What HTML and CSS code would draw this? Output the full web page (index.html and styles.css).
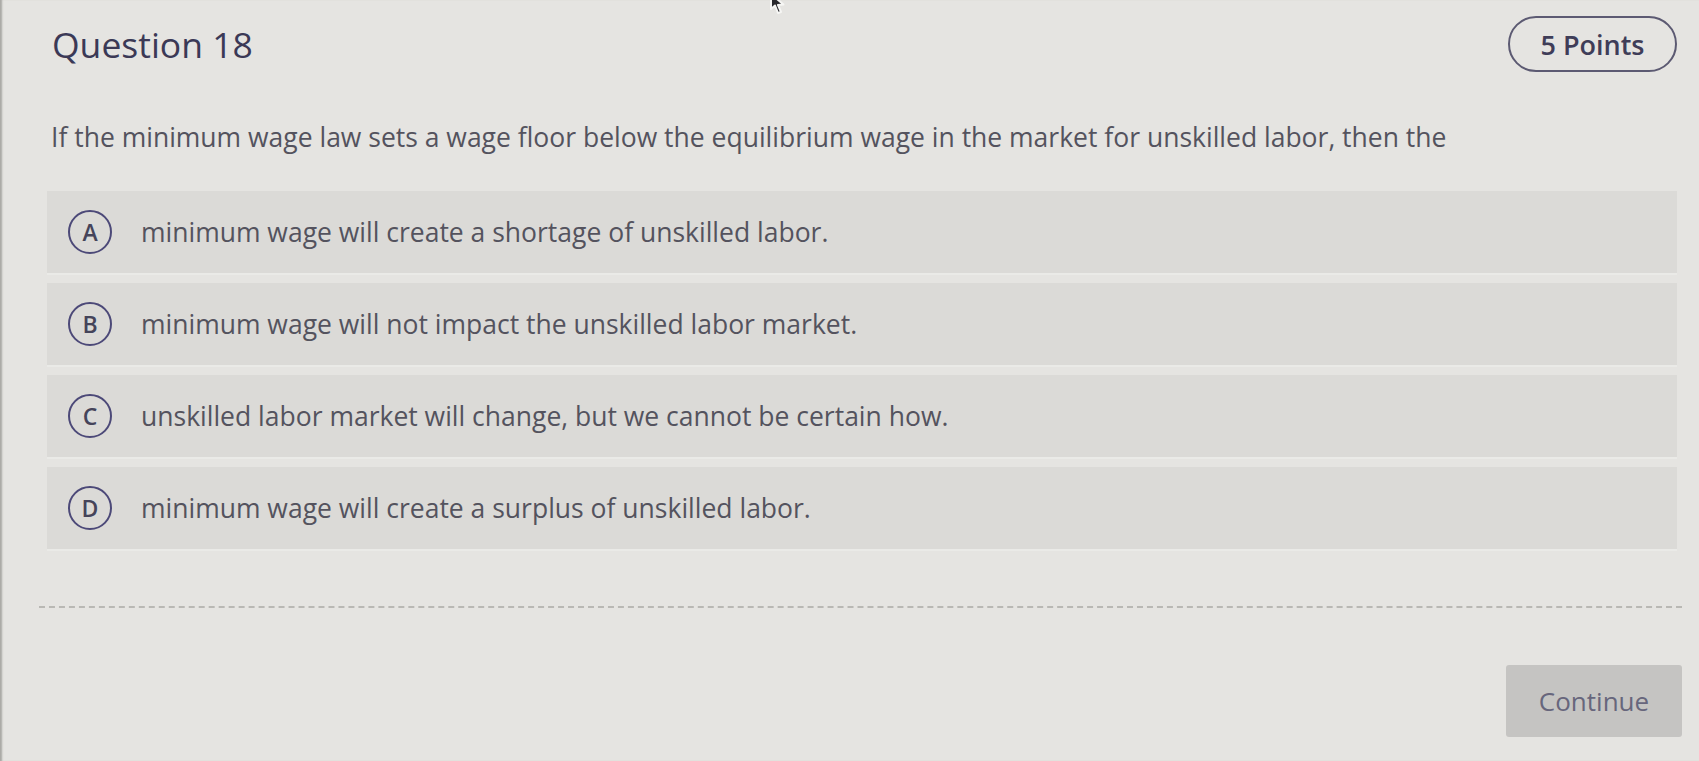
FILE: index.html
```html
<!DOCTYPE html>
<html lang="en">
<head>
<meta charset="utf-8">
<title>Question 18</title>
<link rel="stylesheet" href="styles.css">
</head>
<body>
<div class="page">
  <header class="head">
    <h1 class="title">Question 18</h1>
    <div class="points">5 Points</div>
  </header>
  <p class="question">If the minimum wage law sets a wage floor below the equilibrium wage in the market for unskilled labor, then the</p>
  <ul class="options">
    <li class="option"><span class="letter">A</span><span class="text">minimum wage will create a shortage of unskilled labor.</span></li>
    <li class="option"><span class="letter">B</span><span class="text">minimum wage will not impact the unskilled labor market.</span></li>
    <li class="option"><span class="letter">C</span><span class="text">unskilled labor market will change, but we cannot be certain how.</span></li>
    <li class="option"><span class="letter">D</span><span class="text">minimum wage will create a surplus of unskilled labor.</span></li>
  </ul>
  <div class="divider"></div>
  <div class="actions">
    <button class="continue">Continue</button>
  </div>
</div>
<svg class="cursor" width="22" height="22" viewBox="0 0 22 22">
  <path d="M3 -6 L3 9 L7 5.5 L10 13 L13 12 L10 5 L15.5 4.5 Z" fill="#2a2a2e" stroke="#f6f6f4" stroke-width="2" stroke-linejoin="round"/>
</svg>
</body>
</html>
```
FILE: styles.css
```css
html, body {
  margin: 0;
  padding: 0;
}
body {
  background: #e5e4e1;
  font-family: "Open Sans", "Noto Sans", sans-serif;
  color: #55545e;
  width: 1699px;
  height: 761px;
  overflow: hidden;
  position: relative;
  box-shadow: inset 3px 0 2px -1px #a9a8a4;
}
.page {
  padding: 16px 22px 0 47px;
}
.head {
  display: flex;
  justify-content: space-between;
  align-items: center;
}
.title {
  margin: 0 0 0 5px;
  font-size: 35.5px;
  font-weight: 400;
  color: #3b3956;
  line-height: 44px;
}
.points {
  box-sizing: border-box;
  width: 169px;
  height: 56px;
  border: 2px solid #5c5a72;
  border-radius: 28px;
  display: flex;
  align-items: center;
  justify-content: center;
  font-size: 27px;
  font-weight: 600;
  color: #3f3d58;
}
.question {
  margin: 47px 0 0 4px;
  font-size: 26.5px;
  line-height: 36px;
  color: #54535e;
}
.options {
  list-style: none;
  margin: 36px 0 0 0;
  padding: 0;
  display: flex;
  flex-direction: column;
  gap: 10px;
}
.option {
  height: 82px;
  background: #dbdad7;
  display: flex;
  align-items: center;
  padding-left: 21px;
  box-shadow: 0 2px 0 #eaeae7;
}
.letter {
  box-sizing: border-box;
  width: 44px;
  height: 44px;
  border: 2px solid #4c4978;
  border-radius: 50%;
  display: flex;
  align-items: center;
  justify-content: center;
  font-size: 23px;
  font-weight: 600;
  color: #45445a;
  flex-shrink: 0;
}
.text {
  margin-left: 29px;
  font-size: 26.5px;
  color: #54535e;
}
.divider {
  margin: 57px -5px 0 -8px;
  border-top: 2px dashed #b9b8b4;
}
.actions {
  display: flex;
  justify-content: flex-end;
  margin: 57px -5px 0 0;
}
.continue {
  width: 176px;
  height: 72px;
  border: none;
  border-radius: 3px;
  background: #c5c4c2;
  font-family: "Open Sans", "Noto Sans", sans-serif;
  font-size: 26px;
  color: #67667c;
  padding: 0;
}
.cursor {
  position: absolute;
  left: 768px;
  top: 0;
}
```
